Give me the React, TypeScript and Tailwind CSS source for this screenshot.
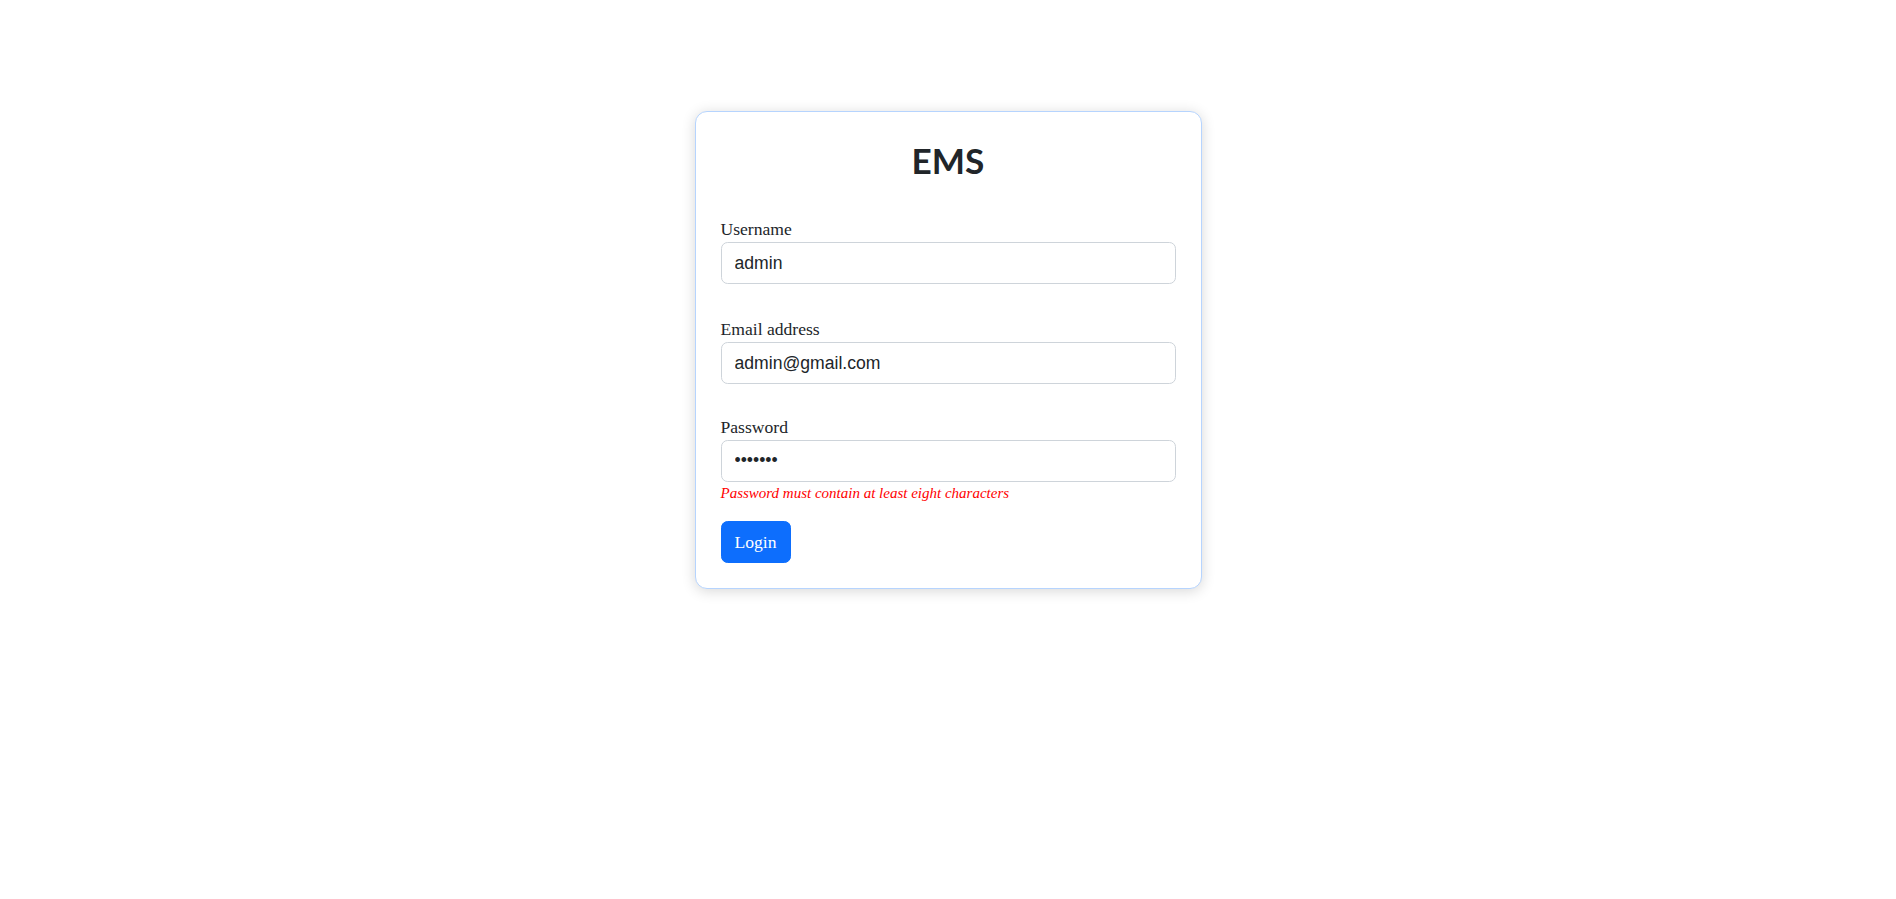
import { useState } from "react";

type FieldProps = {
  label: string;
  type: string;
  value: string;
  onChange: (v: string) => void;
  className?: string;
};

function Field({ label, type, value, onChange, className = "" }: FieldProps) {
  return (
    <div className={className}>
      <label className="block text-[17.6px] leading-[26px] text-[#212529]">{label}</label>
      <input
        type={type}
        value={value}
        onChange={(e) => onChange(e.target.value)}
        className="block h-[42px] w-full rounded-[6.6px] border border-[#ced4da] bg-white px-[13px] font-['Liberation_Sans',Arial,sans-serif] text-[17.6px] text-[#212529] outline-none"
      />
    </div>
  );
}

export default function App() {
  const [username, setUsername] = useState("admin");
  const [email, setEmail] = useState("admin@gmail.com");
  const [password, setPassword] = useState("1234567");

  // same rule as the original form: at least eight characters
  const tooShort = password.length < 8;

  return (
    <div className="min-h-[899px] w-full bg-white pt-[111px] font-['Liberation_Serif','Times_New_Roman',serif]">
      <form
        onSubmit={(e) => e.preventDefault()}
        className="mx-auto w-[507px] rounded-[12px] border border-[#b6d4fe] bg-white p-[25px] shadow-[0_2px_14px_rgba(0,0,0,0.16)]"
      >
        <h2 className="mt-[2px] mb-[35px] text-center font-['Lato',sans-serif] text-[35.2px] font-bold leading-[42px] text-[#212529]">
          EMS
        </h2>

        <Field label="Username" type="text" value={username} onChange={setUsername} className="mb-[32px]" />
        <Field label="Email address" type="email" value={email} onChange={setEmail} className="mb-[29.5px]" />
        <Field label="Password" type="password" value={password} onChange={setPassword} />

        <div className="h-[22.5px]">
          {tooShort && (
            <p className="text-[15px] italic leading-[22.5px] text-[#ff0000]">
              Password must contain at least eight characters
            </p>
          )}
        </div>

        <button
          type="submit"
          className="mt-[16.5px] h-[42px] rounded-[6.6px] border border-[#0d6efd] bg-[#0d6efd] px-[13px] text-[17.6px] leading-[26px] text-white"
        >
          Login
        </button>
      </form>
    </div>
  );
}
